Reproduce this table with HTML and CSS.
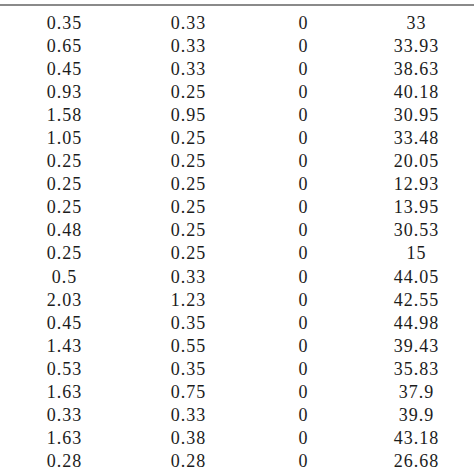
FILE: index.html
```html
<!DOCTYPE html>
<html>
<head>
<meta charset="utf-8">
<link rel="stylesheet" href="styles.css">
</head>
<body>
<div class="table">
  <div class="rule"></div>
  <div class="rows">
    <div class="row"><span>0.35</span><span>0.33</span><span>0</span><span>33</span></div>
    <div class="row"><span>0.65</span><span>0.33</span><span>0</span><span>33.93</span></div>
    <div class="row"><span>0.45</span><span>0.33</span><span>0</span><span>38.63</span></div>
    <div class="row"><span>0.93</span><span>0.25</span><span>0</span><span>40.18</span></div>
    <div class="row"><span>1.58</span><span>0.95</span><span>0</span><span>30.95</span></div>
    <div class="row"><span>1.05</span><span>0.25</span><span>0</span><span>33.48</span></div>
    <div class="row"><span>0.25</span><span>0.25</span><span>0</span><span>20.05</span></div>
    <div class="row"><span>0.25</span><span>0.25</span><span>0</span><span>12.93</span></div>
    <div class="row"><span>0.25</span><span>0.25</span><span>0</span><span>13.95</span></div>
    <div class="row"><span>0.48</span><span>0.25</span><span>0</span><span>30.53</span></div>
    <div class="row"><span>0.25</span><span>0.25</span><span>0</span><span>15</span></div>
    <div class="row"><span>0.5</span><span>0.33</span><span>0</span><span>44.05</span></div>
    <div class="row"><span>2.03</span><span>1.23</span><span>0</span><span>42.55</span></div>
    <div class="row"><span>0.45</span><span>0.35</span><span>0</span><span>44.98</span></div>
    <div class="row"><span>1.43</span><span>0.55</span><span>0</span><span>39.43</span></div>
    <div class="row"><span>0.53</span><span>0.35</span><span>0</span><span>35.83</span></div>
    <div class="row"><span>1.63</span><span>0.75</span><span>0</span><span>37.9</span></div>
    <div class="row"><span>0.33</span><span>0.33</span><span>0</span><span>39.9</span></div>
    <div class="row"><span>1.63</span><span>0.38</span><span>0</span><span>43.18</span></div>
    <div class="row"><span>0.28</span><span>0.28</span><span>0</span><span>26.68</span></div>
  </div>
</div>
</body>
</html>
```
FILE: styles.css
```css
html, body {
  margin: 0;
  padding: 0;
  background: #fff;
}
body {
  font-family: "Liberation Serif", "DejaVu Serif", serif;
  font-size: 18px;
  letter-spacing: 1px;
  color: #1c1c1c;
}
.table {
  width: 474px;
  padding-top: 4px;
}
.rule {
  height: 2px;
  background: #8a8a8a;
}
.rows {
  padding-top: 5.5px;
}
.row {
  display: grid;
  grid-template-columns: 128px 120px 110px 116px;
  height: 23.1px;
  line-height: 23.1px;
}
.row span {
  text-align: center;
  padding-left: 1px;
}
```
